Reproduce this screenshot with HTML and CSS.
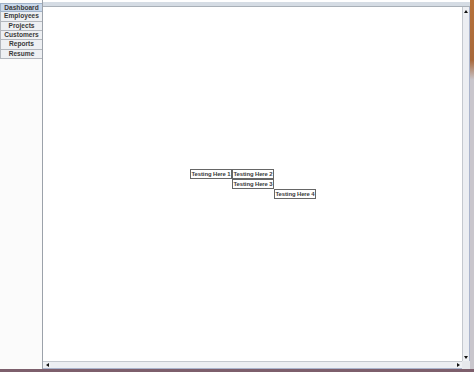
FILE: index.html
```html
<!DOCTYPE html>
<html>
<head>
<meta charset="utf-8">
<link rel="stylesheet" href="styles.css">
</head>
<body>
<div class="app">
  <div class="main">
    <div class="tabs">
      <div class="tab selected">Dashboard</div>
      <div class="tab">Employees</div>
      <div class="tab">Projects</div>
      <div class="tab">Customers</div>
      <div class="tab">Reports</div>
      <div class="tab">Resume</div>
    </div>
    <div class="pane">
      <div class="pane-top"></div>
      <div class="scroll">
        <div class="viewport">
          <div class="grid">
            <div class="label c1 r1">Testing Here 1</div>
            <div class="label c2 r1">Testing Here 2</div>
            <div class="label c2 r2">Testing Here 3</div>
            <div class="label c3 r3">Testing Here 4</div>
          </div>
        </div>
        <div class="vbar">
          <div class="btn"><span class="arr up"></span></div>
          <div class="track"></div>
          <div class="btn"><span class="arr down"></span></div>
        </div>
        <div class="hbar">
          <div class="btn"><span class="arr left"></span></div>
          <div class="track"></div>
          <div class="btn"><span class="arr right"></span></div>
        </div>
        <div class="corner"></div>
      </div>
    </div>
    <div class="edge"></div>
  </div>
  <div class="bottom"></div>
</div>
</body>
</html>
```

FILE: styles.css
```css
html, body {
  margin: 0;
  padding: 0;
  background: #ffffff;
}
.app {
  width: 474px;
  height: 372px;
  display: flex;
  flex-direction: column;
  font-family: "Liberation Sans", Arial, sans-serif;
  overflow: hidden;
}
.main {
  height: 369px;
  display: flex;
}
.bottom {
  height: 3px;
  background: #7d5f6c;
}
.tabs {
  width: 42px;
  padding-top: 3px;
  display: flex;
  flex-direction: column;
  background: #fbfbfb;
}
.tab {
  height: 9.33px;
  box-sizing: border-box;
  border: 1px solid #b3b7bd;
  border-top: none;
  border-right: none;
  background: #eef0f3;
  color: #3a3a3a;
  font-size: 6.6px;
  font-weight: bold;
  line-height: 8px;
  text-align: center;
  white-space: nowrap;
}
.tab.selected {
  border-top: 1px solid #9fb2c9;
  border-color: #9fb2c9;
  background: #c9d8ea;
  line-height: 7.5px;
}
.pane {
  width: 428px;
  box-sizing: border-box;
  border-left: 1px solid #9ca2aa;
  padding-top: 2px;
  display: flex;
  flex-direction: column;
}
.pane-top {
  height: 4px;
  background: #d5dce4;
  border-bottom: 1px solid #a9b0b8;
}
.scroll {
  flex: 1;
  display: grid;
  grid-template-columns: 1fr 8px;
  grid-template-rows: 1fr 8px;
}
.viewport {
  background: #ffffff;
  display: flex;
  align-items: center;
  justify-content: center;
}
.grid {
  display: grid;
  grid-template-columns: repeat(3, 42px);
  grid-template-rows: repeat(3, 10px);
}
.label {
  box-sizing: border-box;
  border: 1px solid #666;
  background: #fff;
  color: #3a3a3a;
  font-size: 5.9px;
  letter-spacing: -0.08px;
  font-weight: bold;
  line-height: 8px;
  padding-left: 1px;
  text-align: left;
  white-space: nowrap;
  overflow: visible;
}
.c1 { grid-column: 1; }
.c2 { grid-column: 2; }
.c3 { grid-column: 3; }
.r1 { grid-row: 1; }
.r2 { grid-row: 2; }
.r3 { grid-row: 3; }
.vbar {
  display: flex;
  flex-direction: column;
  background: #eceef2;
  border-left: 1px solid #c4c8ce;
  border-right: 1px solid #aab4cc;
  box-sizing: border-box;
}
.hbar {
  display: flex;
  background: #eceef2;
  border-top: 1px solid #c4c8ce;
  border-bottom: 1px solid #aab4cc;
  box-sizing: border-box;
}
.vbar .btn {
  height: 8px;
}
.hbar .btn {
  width: 8px;
}
.btn {
  display: flex;
  align-items: center;
  justify-content: center;
  background: #eef0f3;
}
.track {
  flex: 1;
}
.corner {
  background: #e6e8ec;
}
.arr {
  width: 0;
  height: 0;
  border: 2px solid transparent;
}
.arr.up { border-bottom: 3px solid #111; border-top: none; }
.arr.down { border-top: 3px solid #111; border-bottom: none; }
.arr.left { border-right: 3px solid #111; border-left: none; }
.arr.right { border-left: 3px solid #111; border-right: none; }
.edge {
  width: 4px;
  background: linear-gradient(#b7723a 0, #a8683a 60px, #c9c6cc 80px, #c9c6cc 100%);
}
```
